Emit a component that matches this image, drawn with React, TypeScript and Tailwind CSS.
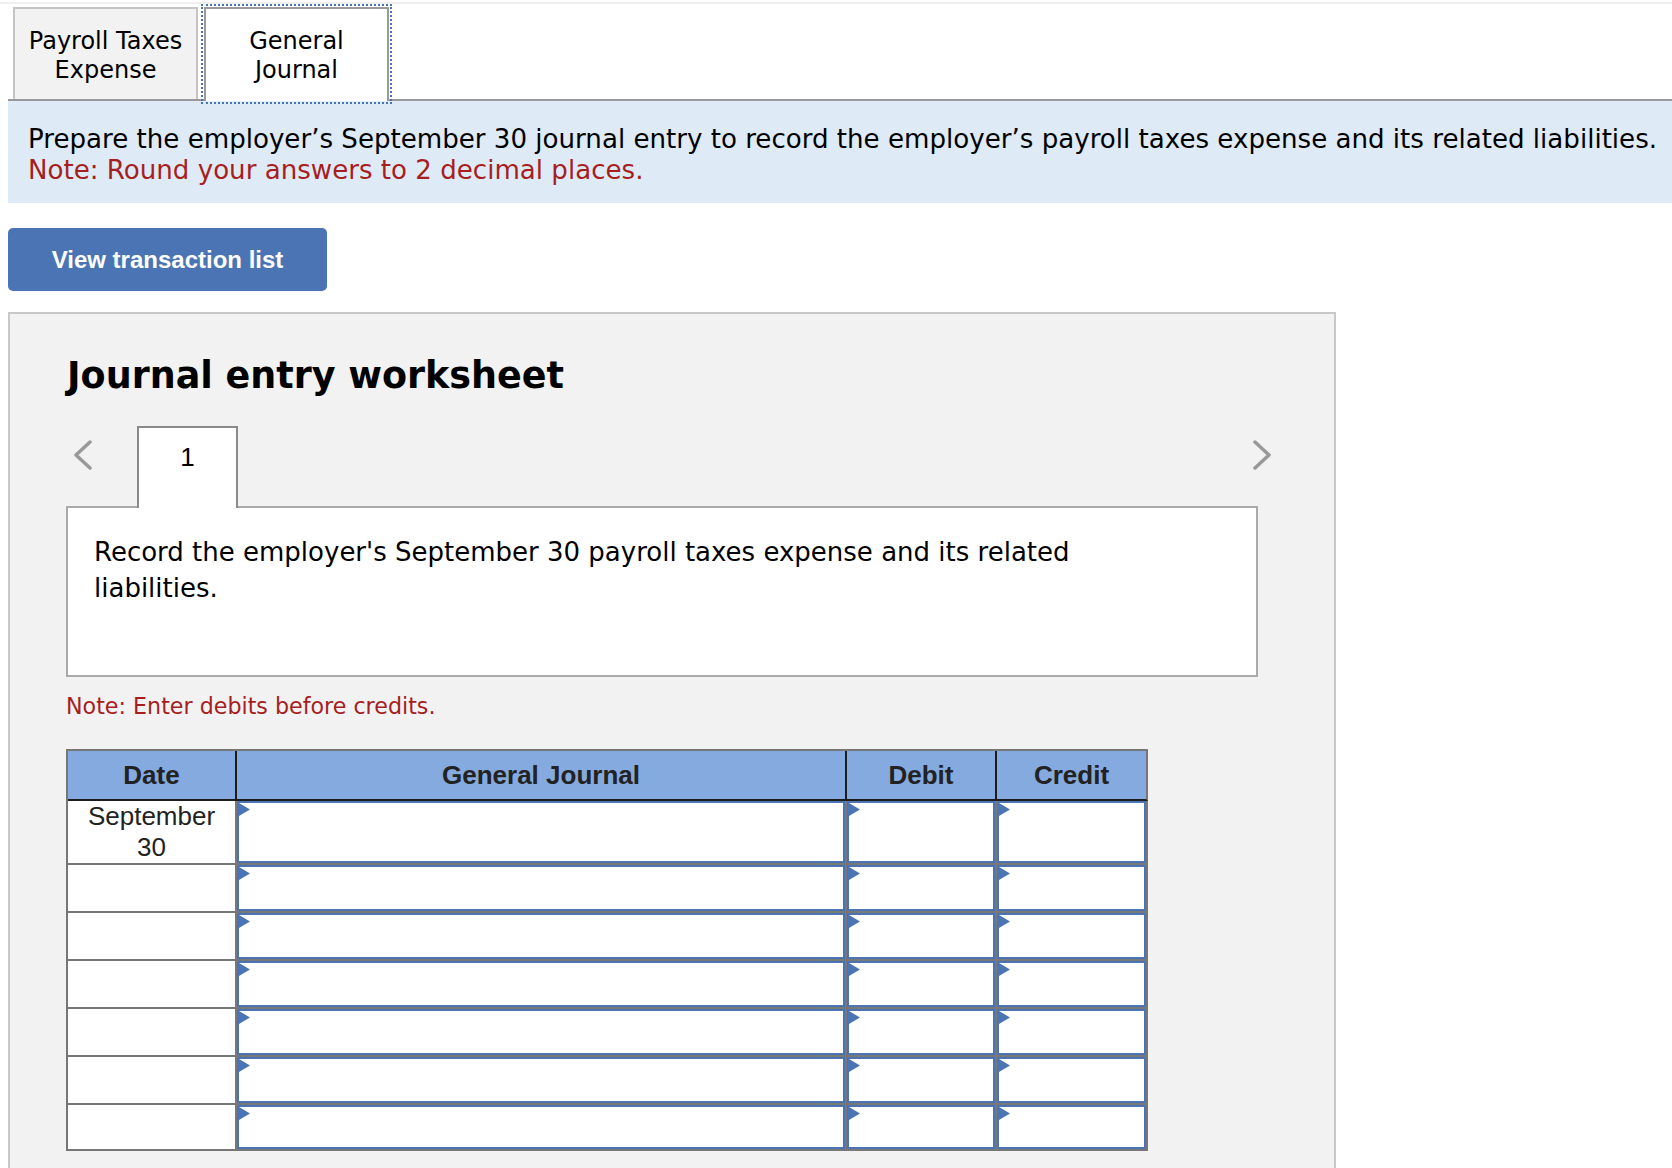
import React from 'react';

const BLUE = '#4a74b4';

function Flag() {
  return (
    <svg className="absolute left-0 top-0" width="11" height="13" viewBox="0 0 11 13">
      <polygon points="0,0 11,6.5 0,13" fill={BLUE} />
    </svg>
  );
}

function InputCell({ h }: { h: string }) {
  return (
    <div className={`${h} border-r-2 border-b-2 border-[#777] bg-white`}>
      <div className="relative h-full border-2 border-[#4a74b4] bg-white">
        <Flag />
      </div>
    </div>
  );
}

function DateCell({ h, children }: { h: string; children?: React.ReactNode }) {
  return (
    <div
      className={`${h} flex flex-col items-center justify-center border-r-2 border-b-2 border-[#777] bg-white text-[26px] leading-[31px] text-[#222]`}
    >
      {children}
    </div>
  );
}

function HeadCell({ label, last }: { label: string; last?: boolean }) {
  return (
    <div
      className={`flex h-[50px] items-center justify-center border-b-2 border-b-[#1c1c1c] border-r-2 ${last ? 'border-r-[#777]' : 'border-r-[#1c1c1c]'} bg-[#84aadf] text-[26px] font-bold text-[#222]`}
    >
      {label}
    </div>
  );
}

function Chevron({ dir }: { dir: 'left' | 'right' }) {
  return (
    <svg width="18" height="30" viewBox="0 0 18 30" fill="none">
      <polyline
        points={dir === 'left' ? '16,2 2,15 16,28' : '2,2 16,15 2,28'}
        stroke="#999"
        strokeWidth="3.5"
        strokeLinecap="round"
        strokeLinejoin="round"
      />
    </svg>
  );
}

export default function App() {
  const rowHeights = ['h-[64px]', 'h-[48px]', 'h-[48px]', 'h-[48px]', 'h-[48px]', 'h-[48px]', 'h-[46px]'];

  return (
    <div className="min-h-[1168px] w-[1672px] bg-white font-['DejaVu_Sans',sans-serif] text-black">
      <div className="mt-[2px] h-[2px] bg-[#efefef]" />

      {/* Tabs */}
      <div className="ml-[8px] mt-[3px] flex h-[94px] border-b-2 border-[#999] pl-[5px]">
        <div className="flex h-[92px] w-[185px] flex-col items-center justify-center border-2 border-b-0 border-[#c4c4c4] bg-[#f2f2f2] pt-[4px] text-[24px] leading-[29px]">
          <span>Payroll Taxes</span>
          <span>Expense</span>
        </div>
        <div className="relative z-10 ml-[6px] flex h-[94px] w-[185px] flex-col items-center justify-center border-2 border-b-0 border-[#9a9a9a] bg-white pt-[2px] text-[24px] leading-[29px] outline-2 outline-offset-[1px] outline-dotted outline-[#4a74b4]">
          <span>General</span>
          <span>Journal</span>
        </div>
      </div>

      {/* Instructions */}
      <div className="ml-[8px] h-[102px] bg-[#dfeaf7] pl-[20px] pt-[23px] text-[26.1px] leading-[31px]">
        <p className="whitespace-nowrap">
          Prepare the employer’s September 30 journal entry to record the employer’s payroll taxes expense and its related liabilities.
        </p>
        <p className="text-[#a61e1e]">Note: Round your answers to 2 decimal places.</p>
      </div>

      <button
        type="button"
        className="ml-[8px] mt-[25px] flex h-[63px] w-[319px] items-center justify-center rounded-[5px] bg-[#4a74b4] font-['Liberation_Sans',sans-serif] text-[24px] font-bold text-white"
      >
        View transaction list
      </button>

      {/* Worksheet */}
      <div className="ml-[8px] mt-[21px] w-[1328px] border-2 border-[#c8c8c8] bg-[#f2f2f2] pb-[60px] pl-[56px] pt-[40px]">
        <h2 className="ml-[1px] text-[36.5px] font-bold leading-[44px]">Journal entry worksheet</h2>

        <div className="mt-[28px] flex h-[80px] w-[1205px] items-start">
          <div className="w-[71px] pl-[8px] pt-[14px]">
            <Chevron dir="left" />
          </div>
          <div className="relative z-10 flex h-[82px] w-[101px] justify-center border-2 border-b-0 border-[#8a8a8a] bg-white pt-[14px] font-['Liberation_Sans',sans-serif] text-[26px] leading-[30px]">
            1
          </div>
          <div className="ml-auto pt-[14px]">
            <Chevron dir="right" />
          </div>
        </div>

        <div className="h-[171px] w-[1192px] border-2 border-[#aaa] bg-white pl-[26px] pt-[26px] text-[26px] leading-[36px]">
          <p className="max-w-[1040px]">
            Record the employer's September 30 payroll taxes expense and its related liabilities.
          </p>
        </div>

        <p className="mt-[15px] text-[22.2px] leading-[28px] text-[#a61e1e]">Note: Enter debits before credits.</p>

        <div className="mt-[29px] grid w-fit grid-cols-[169px_610px_150px_151px] border-l-2 border-t-2 border-[#777] font-['Liberation_Sans',sans-serif]">
          <HeadCell label="Date" />
          <HeadCell label="General Journal" />
          <HeadCell label="Debit" />
          <HeadCell label="Credit" last />
          {rowHeights.map((h, r) => (
            <React.Fragment key={r}>
              <DateCell h={h}>
                {r === 0 && (
                  <>
                    <span>September</span>
                    <span>30</span>
                  </>
                )}
              </DateCell>
              <InputCell h={h} />
              <InputCell h={h} />
              <InputCell h={h} />
            </React.Fragment>
          ))}
        </div>
      </div>
    </div>
  );
}
